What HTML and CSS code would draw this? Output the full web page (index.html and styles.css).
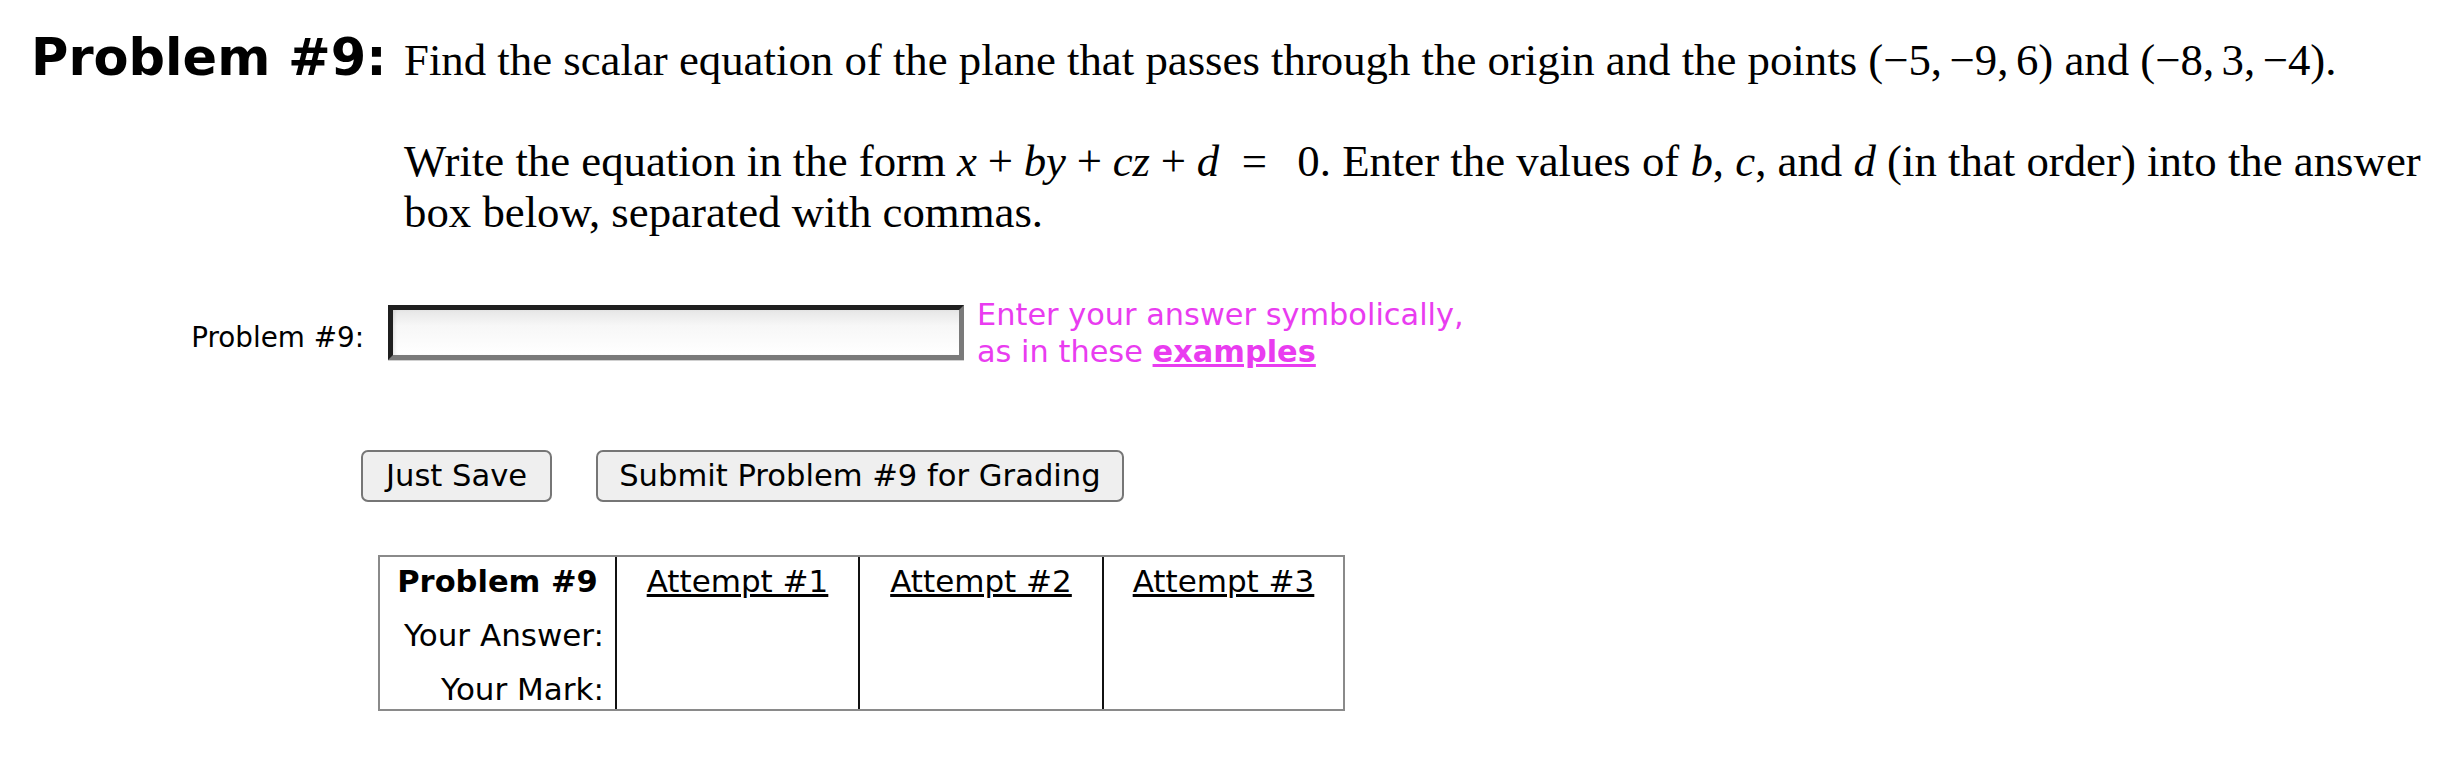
FILE: index.html
```html
<!DOCTYPE html>
<html lang="en">
<head>
<meta charset="utf-8">
<title>Problem #9</title>
<link rel="stylesheet" href="styles.css">
</head>
<body>
<div class="page">
  <div class="problem">
    <h1 class="pnum">Problem #9:</h1>
    <div class="statement">
      <p class="para">Find the scalar equation of the plane that passes through the origin and the points <span class="math">(−5,<span class="thin"></span>−9,<span class="thin"></span>6)</span> and <span class="math">(−8,<span class="thin"></span>3,<span class="thin"></span>−4)</span>.</p>
      <p class="para">Write the equation in the form <span class="math"><i>x</i><span class="op">+</span><i>by</i><span class="op">+</span><i>cz</i><span class="op">+</span><i>d</i><span class="rel">=</span>0</span>. Enter the values of <i>b</i>, <i>c</i>, and <i>d</i> (in that order) into the answer box below, separated with commas.</p>
    </div>
  </div>

  <div class="answer-row">
    <label class="alabel" for="ans9">Problem #9:</label>
    <input class="ainput" id="ans9" type="text">
    <div class="hint">Enter your answer symbolically,<br>as in these <a class="hint-link" href="#">examples</a></div>
  </div>

  <div class="buttons">
    <button class="btn btn-save" type="button">Just Save</button>
    <button class="btn" type="button">Submit Problem #9 for Grading</button>
  </div>

  <table class="attempts">
    <tr class="r1">
      <th class="c1 head">Problem #9</th>
      <th class="c2"><a class="att" href="#">Attempt #1</a></th>
      <th class="c3"><a class="att" href="#">Attempt #2</a></th>
      <th class="c4"><a class="att" href="#">Attempt #3</a></th>
    </tr>
    <tr class="r2">
      <td class="c1 lab">Your Answer:</td>
      <td class="c2"></td>
      <td class="c3"></td>
      <td class="c4"></td>
    </tr>
    <tr class="r3">
      <td class="c1 lab">Your Mark:</td>
      <td class="c2"></td>
      <td class="c3"></td>
      <td class="c4"></td>
    </tr>
  </table>
</div>
</body>
</html>
```

FILE: styles.css
```css
html, body {
  margin: 0;
  padding: 0;
  background: #ffffff;
  color: #000000;
}

.page {
  padding-top: 32px;
  font-family: "DejaVu Sans", Verdana, sans-serif;
}

/* ---------- problem statement ---------- */
.problem {
  display: flex;
  align-items: baseline;
  padding-left: 31px;
}

.pnum {
  flex: 0 0 373px;
  margin: 0;
  font-family: "DejaVu Sans", Verdana, sans-serif;
  font-weight: bold;
  font-size: 51px;
  line-height: 51px;
}

.statement {
  width: 2036px;
  font-family: "Liberation Serif", "Times New Roman", serif;
  font-size: 44.8px;
  line-height: 51px;
}

.para {
  margin: 0 0 50px 0;
}

.para:last-child {
  margin-bottom: 0;
}

.math {
  white-space: nowrap;
}

.statement i {
  font-style: italic;
}

.thin {
  display: inline-block;
  width: 0.167em;
}

.op {
  margin: 0 0.24em;
}

.rel {
  margin: 0 0.68em 0 0.5em;
}

/* ---------- answer row ---------- */
.answer-row {
  display: flex;
  align-items: center;
  margin-top: 56px;
}

.alabel {
  width: 364px;
  margin-top: 12px;
  text-align: right;
  font-size: 27.8px;
  line-height: 34px;
}

.ainput {
  box-sizing: border-box;
  width: 576px;
  height: 55px;
  margin: 0 0 0 24px;
  padding: 0 8px;
  border-style: solid;
  border-width: 5px;
  border-color: #1f1f1f #7a7a7a #7a7a7a #1f1f1f;
  background: linear-gradient(#e6e6e6 0%, #f7f7f7 35%, #ffffff 100%);
  box-shadow: inset 3px 0 4px -2px rgba(0, 0, 0, 0.12), 0 1px 0 #d0d0d0;
  font-family: "DejaVu Sans", Verdana, sans-serif;
  font-size: 28px;
  outline: none;
}

.hint {
  margin-left: 13px;
  margin-top: 2px;
  color: #e93cf0;
  font-size: 30.4px;
  line-height: 37px;
}

.hint-link {
  color: #e93cf0;
  font-weight: bold;
  text-decoration: underline;
}

/* ---------- buttons ---------- */
.buttons {
  display: flex;
  gap: 44px;
  margin-top: 80px;
  padding-left: 361px;
}

.btn {
  box-sizing: border-box;
  height: 52px;
  padding: 0 21px;
  border: 2px solid #767676;
  border-radius: 7px;
  background: #efefef;
  color: #000000;
  font-family: "DejaVu Sans", Verdana, sans-serif;
  font-size: 30.6px;
  line-height: 46px;
}

.btn-save {
  padding: 0 23px;
}

/* ---------- attempts table ---------- */
.attempts {
  margin: 53px 0 0 378px;
  border: 2px solid #8a8a8a;
  border-spacing: 0;
  border-collapse: separate;
  table-layout: fixed;
  font-size: 31px;
  line-height: 35px;
}

.attempts th,
.attempts td {
  box-sizing: border-box;
  padding: 0;
  text-align: center;
  vertical-align: top;
  font-weight: normal;
}

.attempts .c1 { width: 235px; }
.attempts .c2 { width: 243px; }
.attempts .c3 { width: 244px; }
.attempts .c4 { width: 241px; }

.attempts .c2,
.attempts .c3,
.attempts .c4 {
  border-left: 2px solid #111111;
}

.attempts th.head {
  font-weight: bold;
  font-size: 30.5px;
}

.attempts .lab {
  text-align: right;
  padding-right: 11px;
}

.r1 th { padding-top: 6.5px; padding-bottom: 9px; }
.r2 td { padding-top: 10px; padding-bottom: 9.5px; }
.r3 td { padding-top: 10px; padding-bottom: 1.5px; }

.att {
  color: #000000;
  text-decoration: underline;
}
```
